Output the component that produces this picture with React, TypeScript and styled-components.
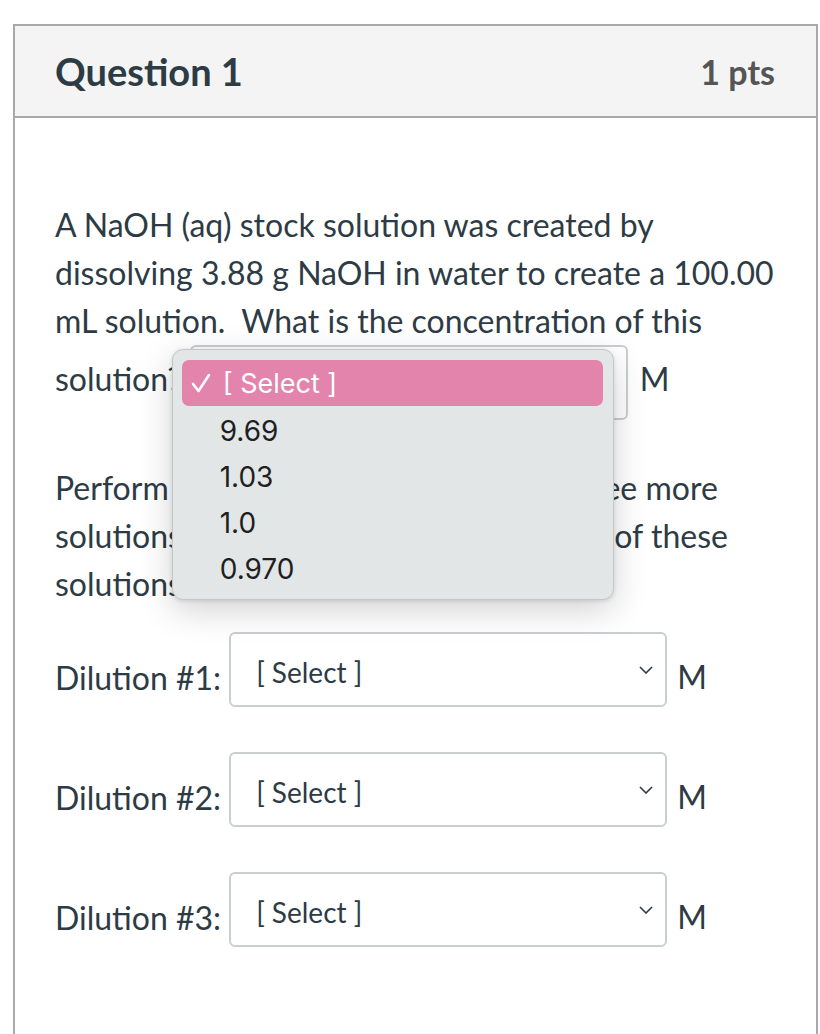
import React from "react";
import styled, { createGlobalStyle } from "styled-components";

const GlobalStyle = createGlobalStyle`
  html, body {
    margin: 0;
    padding: 0;
    background: #ffffff;
  }
  body {
    font-family: Lato, "Open Sans", sans-serif;
    color: #2d3b45;
    overflow: hidden;
  }
`;

const Page = styled.div`
  padding: 24px 2px 0 13px;
  height: 1034px;
  box-sizing: border-box;
  overflow: hidden;
`;

const Card = styled.section`
  border: 2px solid #a9a9a9;
  border-bottom: none;
  min-height: 1100px;
`;

const Header = styled.header`
  display: flex;
  align-items: center;
  justify-content: space-between;
  height: 90px;
  padding: 0 41px 0 40px;
  background: #f4f4f4;
  border-bottom: 2px solid #a9a9a9;
`;

const Title = styled.h2`
  margin: 0;
  font-size: 38px;
  font-weight: 700;
  color: #2d3b45;
`;

const Points = styled.span`
  font-size: 34px;
  font-weight: 700;
  color: #555555;
`;

const Body = styled.div`
  padding: 83px 41px 0 40px;
  font-size: 32px;
  line-height: 48px;
`;

const Paragraph = styled.p<{ $gap?: number }>`
  margin: 0 0 ${({ $gap }) => $gap ?? 0}px;
`;

const SelectWrap = styled.span<{ $left: number }>`
  position: relative;
  display: inline-block;
  vertical-align: middle;
  margin-left: ${({ $left }) => $left}px;
`;

const SelectBox = styled.span`
  display: flex;
  align-items: center;
  justify-content: space-between;
  box-sizing: border-box;
  width: 438px;
  height: 75px;
  padding: 0 12px 0 25px;
  border: 2px solid #c9ced1;
  border-radius: 6px;
  background: #ffffff;
  font-size: 28px;
  line-height: 1;
  color: #2d3b45;
`;

const Placeholder = styled.span`
  margin-top: 4px;
`;

const Unit = styled.span`
  margin-left: 12px;
`;

const Row = styled.div`
  display: flex;
  align-items: center;
  margin-bottom: 45px;
`;

const RowLabel = styled.span`
  padding-top: 16px;
  margin-right: 8px;
`;

const RowUnit = styled.span`
  padding-top: 14px;
  margin-left: 10px;
`;

const Popup = styled.div`
  position: absolute;
  left: -18px;
  top: 4px;
  z-index: 5;
  box-sizing: border-box;
  width: 442px;
  padding: 10px 10px 9px 9px;
  background: #e3e6e7;
  border: 1px solid #c4c7c9;
  border-radius: 11px;
  box-shadow: 0 10px 34px rgba(0, 0, 0, 0.18), 0 1px 4px rgba(0, 0, 0, 0.12);
  font-family: Inter, "Liberation Sans", sans-serif;
`;

const Option = styled.div<{ $active?: boolean }>`
  display: flex;
  align-items: center;
  height: 46px;
  padding-left: ${({ $active }) => ($active ? 9 : 38)}px;
  padding-top: ${({ $active }) => ($active ? 0 : 4)}px;
  box-sizing: border-box;
  border-radius: 7px;
  background: ${({ $active }) => ($active ? "#e384ad" : "transparent")};
  color: ${({ $active }) => ($active ? "#ffffff" : "#1f1f1f")};
  font-size: ${({ $active }) => ($active ? 27 : 28)}px;
  line-height: 1;
`;

const Check = styled.svg`
  width: 20px;
  height: 20px;
  margin-right: 12px;
`;

const Chevron = () => (
  <svg width="14" height="8" viewBox="0 0 14 8" fill="none">
    <path d="M1 1l6 6 6-6" stroke="#2d3b45" strokeWidth="1.6" />
  </svg>
);

const Select: React.FC<{ open?: boolean; left?: number }> = ({
  open,
  left = 0,
}) => (
  <SelectWrap $left={left}>
    <SelectBox>
      <Placeholder>[ Select ]</Placeholder>
      <Chevron />
    </SelectBox>
    {open && (
      <Popup>
        <Option $active>
          <Check viewBox="0 0 20 20" fill="none">
            <path
              d="M2 11l5.5 7L18 2"
              stroke="#ffffff"
              strokeWidth="2.6"
              strokeLinecap="round"
              strokeLinejoin="round"
            />
          </Check>
          [ Select ]
        </Option>
        <Option>9.69</Option>
        <Option>1.03</Option>
        <Option>1.0</Option>
        <Option>0.970</Option>
      </Popup>
    )}
  </SelectWrap>
);

const dilutions = ["Dilution #1:", "Dilution #2:", "Dilution #3:"];

const App: React.FC = () => {
  return (
    <Page>
      <GlobalStyle />
      <Card>
        <Header>
          <Title>Question 1</Title>
          <Points>1 pts</Points>
        </Header>
        <Body>
          <Paragraph $gap={44}>
            A NaOH (aq) stock solution was created by dissolving 3.88 g NaOH
            in water to create a 100.00 mL solution.&nbsp; What is the
            concentration of this solution?
            <Select open left={8} />
            <Unit>M</Unit>
          </Paragraph>
          <Paragraph $gap={24}>
            Perform 2x serial dilutions to create three more solutions.&nbsp;
            So what is the concentration of these solutions?
          </Paragraph>
          {dilutions.map((label) => (
            <Row key={label}>
              <RowLabel>{label}</RowLabel>
              <Select />
              <RowUnit>M</RowUnit>
            </Row>
          ))}
        </Body>
      </Card>
    </Page>
  );
};

export default App;
